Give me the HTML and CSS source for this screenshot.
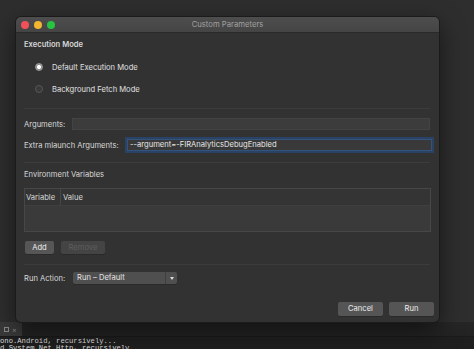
FILE: index.html
```html
<!DOCTYPE html>
<html>
<head>
<meta charset="utf-8">
<link rel="stylesheet" href="styles.css">
</head>
<body>
<div class="ide">
  <div class="ide-top"></div>
  <div class="tabstrip">
    <div class="tab"><span class="tab-icon"></span><span class="tab-x">×</span></div>
  </div>
  <div class="terminal">
    <div class="term-line">ono.Android, recursively...</div>
    <div class="term-line">d System.Net.Http, recursively...</div>
  </div>
</div>

<div class="dialog">
  <div class="titlebar">
    <div class="lights">
      <span class="light red"></span>
      <span class="light yellow"></span>
      <span class="light green"></span>
    </div>
    <div class="title">Custom Parameters</div>
    <div></div>
  </div>

  <div class="content">
    <div class="section-title">Execution Mode</div>
    <div class="radios">
      <div class="radio-row"><span class="radio on"></span><span>Default Execution Mode</span></div>
      <div class="radio-row"><span class="radio"></span><span>Background Fetch Mode</span></div>
    </div>
    <div class="divider d1"></div>

    <div class="field-row args">
      <span class="field-label lbl-args">Arguments:</span>
      <div class="input"></div>
    </div>
    <div class="field-row extra">
      <span class="field-label lbl-extra">Extra mlaunch Arguments:</span>
      <div class="input focused">--argument=-FIRAnalyticsDebugEnabled</div>
    </div>
    <div class="divider d2"></div>

    <div class="section-label">Environment Variables</div>
    <div class="table">
      <div class="thead">
        <div class="th th-var">Variable</div>
        <div class="th th-val">Value</div>
      </div>
      <div class="tbody"></div>
    </div>
    <div class="table-buttons">
      <button class="btn btn-add">Add</button>
      <button class="btn btn-remove" disabled>Remove</button>
    </div>
    <div class="divider d3"></div>

    <div class="run-row">
      <span class="field-label lbl-run">Run Action:</span>
      <div class="select">
        <span class="select-text">Run – Default</span>
        <span class="select-arrow">
          <svg width="4" height="3" viewBox="0 0 4 3"><path d="M0 0 L4 0 L2 3 Z" fill="#dcdcdc"/></svg>
        </span>
      </div>
    </div>

    <div class="spacer"></div>
    <div class="footer">
      <button class="btn btn-footer">Cancel</button>
      <button class="btn btn-footer">Run</button>
    </div>
  </div>
</div>
</body>
</html>
```

FILE: styles.css
```css
* { box-sizing: border-box; }
html, body {
  margin: 0;
  padding: 0;
  width: 474px;
  height: 349px;
  overflow: hidden;
  background: #2c2c2c;
  font-family: Inter, "Liberation Sans", Arial, sans-serif;
}

.ide {
  width: 474px;
  height: 349px;
  display: flex;
  flex-direction: column;
}
.ide-top {
  flex: 1;
  background: #2e2e2e;
}
.tabstrip {
  height: 15px;
  background: linear-gradient(#262626, #232323);
  display: flex;
  border-bottom: 1px solid #1a1a1a;
}
.tab {
  width: 22px;
  height: 100%;
  background: #393939;
  display: flex;
  align-items: center;
  gap: 3px;
  padding-left: 4px;
}
.tab-icon {
  width: 5px;
  height: 5px;
  border: 1px solid #8a8a8a;
}
.tab-x {
  font-size: 7px;
  color: #8a8a8a;
  line-height: 7px;
}
.terminal {
  height: 12px;
  background: #1f1f1f;
  font-family: "Liberation Mono", "DejaVu Sans Mono", monospace;
  font-size: 7.2px;
  line-height: 7px;
  color: #dedede;
  padding-top: 1px;
  white-space: nowrap;
}

.dialog {
  position: absolute;
  left: 16px;
  top: 17px;
  width: 423px;
  height: 305px;
  background: #323232;
  border-radius: 5px;
  overflow: hidden;
  box-shadow: 0 0 0 1px #1b1b1b, 0 8px 24px rgba(0, 0, 0, 0.55);
  display: flex;
  flex-direction: column;
  color: #dcdcdc;
  font-size: 7.6px;
}

.titlebar {
  height: 16px;
  flex: none;
  background: linear-gradient(#4d4d4d, #454545);
  border-bottom: 1px solid #2a2a2a;
  display: grid;
  grid-template-columns: 1fr auto 1fr;
  align-items: center;
}
.lights {
  display: flex;
  gap: 5px;
  padding-left: 5px;
}
.light {
  width: 8px;
  height: 8px;
  border-radius: 50%;
}
.red { background: #f0505a; }
.yellow { background: #f4b630; }
.green { background: #26c440; }
.title {
  color: #a0a0a0;
  font-size: 7.7px;
}

.content {
  flex: 1;
  display: flex;
  flex-direction: column;
  padding: 0 9px 0 8px;
}

.section-title {
  margin-top: 7px;
  height: 10px;
  line-height: 10px;
  font-weight: 600;
  color: #d6d6d6;
}

.radios {
  margin-top: 6px;
  display: flex;
  flex-direction: column;
}
.radio-row {
  height: 22px;
  display: flex;
  align-items: center;
  padding-left: 11px;
  gap: 9px;
  color: #e0e0e0;
}
.radio {
  width: 8px;
  height: 8px;
  border-radius: 50%;
  background: #393939;
  border: 1px solid #565656;
  flex: none;
}
.radio.on {
  background: radial-gradient(circle, #ffffff 0 1.8px, #8c8c8c 2.3px);
  border: 1px solid #9a9a9a;
}

.divider {
  height: 1px;
  background: #3c3c3c;
  flex: none;
}
.d1 { margin-top: 8px; }
.d2 { margin-top: 11px; }
.d3 { margin-top: 10px; }

.field-row {
  height: 12px;
  display: flex;
  align-items: center;
}
.args { margin-top: 9px; }
.extra { margin-top: 9px; }
.field-label {
  flex: none;
  color: #d8d8d8;
}
.lbl-args { width: 48px; }
.lbl-extra { width: 103px; }
.lbl-run { width: 49px; }
.input {
  flex: 1;
  height: 12px;
  background: #3c3c3c;
  border: 1px solid #434343;
  line-height: 10px;
  padding-left: 2px;
  color: #e6e6e6;
  white-space: nowrap;
}
.input.focused {
  margin-right: -2px;
  background: #393939;
  border-color: #33527c;
  box-shadow: 0 0 0 2px #2a4264;
}

.section-label {
  margin-top: 7px;
  height: 10px;
  line-height: 10px;
  color: #d8d8d8;
}

.table {
  margin-top: 8px;
  height: 44px;
  margin-right: -1px;
  border: 1px solid #474747;
  display: flex;
  flex-direction: column;
  flex: none;
}
.thead {
  height: 17px;
  display: flex;
  background: #343434;
  border-bottom: 1px solid #3f3f3f;
}
.th {
  display: flex;
  align-items: center;
  color: #d8d8d8;
}
.th-var {
  width: 36px;
  padding-left: 1px;
  border-right: 1px solid #474747;
}
.th-val { padding-left: 2px; }
.tbody {
  flex: 1;
  background: #3a3a3a;
}

.btn {
  font-family: Inter, "Liberation Sans", Arial, sans-serif;
  font-size: 7.6px;
  border: none;
  border-radius: 2px;
  padding: 0;
  height: 13px;
  line-height: 13px;
  color: #ececec;
  background: #565656;
  box-shadow: 0 1px 0 #2a2a2a;
}
.table-buttons {
  margin-top: 9px;
  display: flex;
  gap: 7px;
  padding-left: 1px;
}
.btn-add { width: 29px; }
.btn-remove {
  width: 44px;
  background: #444444;
  color: #5e5e5e;
}

.run-row {
  margin-top: 7px;
  height: 12px;
  display: flex;
  align-items: center;
}
.select {
  width: 104px;
  height: 12px;
  display: flex;
  background: #4f4f4f;
  border-radius: 2px;
  color: #e4e4e4;
  box-shadow: 0 1px 0 #2a2a2a;
}
.select-text {
  flex: 1;
  padding-left: 4px;
  line-height: 12px;
}
.select-arrow {
  width: 12px;
  border-left: 1px solid #3e3e3e;
  display: flex;
  align-items: center;
  justify-content: center;
}

.spacer { flex: 1; }
.footer {
  display: flex;
  justify-content: flex-end;
  gap: 6px;
  margin-right: -4px;
  margin-bottom: 6px;
}
.btn-footer {
  width: 45px;
  height: 14px;
  line-height: 14px;
  background: #555555;
}
```
